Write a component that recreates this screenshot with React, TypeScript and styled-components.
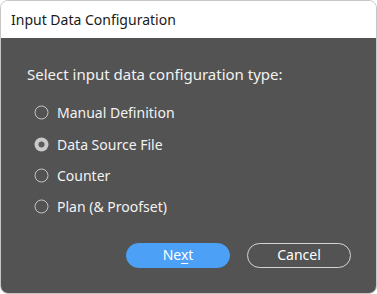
import React, { useState } from 'react';
import styled, { createGlobalStyle } from 'styled-components';

const Global = createGlobalStyle`
  html, body {
    margin: 0;
    padding: 0;
    background: #ffffff;
  }
  * {
    box-sizing: border-box;
  }
`;

const Window = styled.div`
  width: 377px;
  height: 294px;
  border: 1px solid #c6c6c6;
  border-radius: 8px;
  overflow: hidden;
  display: flex;
  flex-direction: column;
  font-family: "Noto Sans", "Open Sans", sans-serif;
`;

const TitleBar = styled.div`
  height: 37px;
  flex: none;
  background: #ffffff;
  color: #1a1a1a;
  font-size: 14px;
  display: flex;
  align-items: center;
  padding: 0 0 1px 10px;
`;

const Body = styled.div`
  flex: 1;
  background: #535353;
  color: #f2f2f2;
  display: flex;
  flex-direction: column;
  padding: 26px 25px 0 26px;
`;

const Prompt = styled.div`
  font-size: 15px;
  line-height: 20px;
`;

const Options = styled.div`
  display: flex;
  flex-direction: column;
  margin-top: 13px;
`;

const Option = styled.label`
  display: flex;
  align-items: center;
  gap: 8px;
  height: 31.4px;
  padding-left: 7px;
  font-size: 14px;
  cursor: default;
`;

const Footer = styled.div`
  display: flex;
  justify-content: flex-end;
  gap: 17px;
  margin-top: 20px;
`;

const Button = styled.button<{ $primary?: boolean }>`
  width: 104px;
  height: 25px;
  border-radius: 13px;
  font-family: inherit;
  font-size: 14px;
  color: #ffffff;
  padding: 0 0 1px;
  background: ${p => (p.$primary ? '#4ca0f5' : 'transparent')};
  border: 1px solid ${p => (p.$primary ? '#4ca0f5' : '#d4d4d4')};
  u {
    text-underline-offset: 3px;
  }
`;

function Radio({ checked }: { checked: boolean }) {
  return (
    <svg width="15" height="15" viewBox="0 0 15 15">
      {checked ? (
        <>
          <circle cx="7.5" cy="7.5" r="7" fill="#c9c9c9" />
          <circle cx="7.5" cy="7.5" r="3" fill="#5c5c5c" />
        </>
      ) : (
        <circle cx="7.5" cy="7.5" r="6.5" fill="none" stroke="#c4c4c4" strokeWidth="1" />
      )}
    </svg>
  );
}

const items = ['Manual Definition', 'Data Source File', 'Counter', 'Plan (& Proofset)'];

export default function App() {
  const [sel, setSel] = useState(1);
  return (
    <>
      <Global />
      <Window>
        <TitleBar>Input Data Configuration</TitleBar>
        <Body>
          <Prompt>Select input data configuration type:</Prompt>
          <Options>
            {items.map((t, i) => (
              <Option key={t} onClick={() => setSel(i)}>
                <Radio checked={sel === i} />
                {t}
              </Option>
            ))}
          </Options>
          <Footer>
            <Button $primary>
              Ne<u>x</u>t
            </Button>
            <Button>Cancel</Button>
          </Footer>
        </Body>
      </Window>
    </>
  );
}
